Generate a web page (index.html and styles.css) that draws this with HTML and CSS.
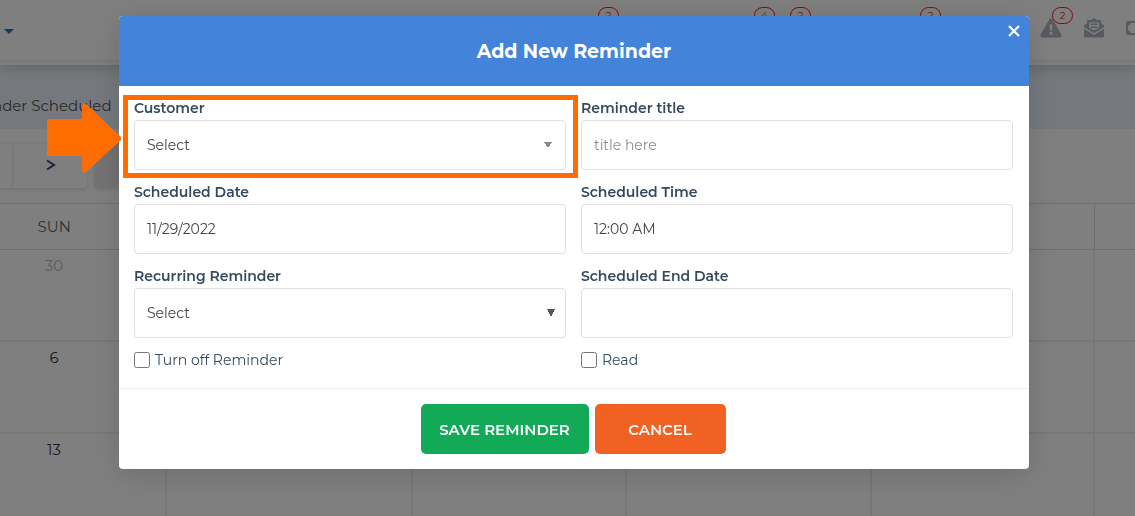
FILE: index.html
```
<!DOCTYPE html>
<html lang="en">
<head>
    <meta charset="UTF-8">
    <meta name="viewport" content="width=device-width, initial-scale=1.0">
    <title>Reminder Scheduled</title>
    <link rel="stylesheet" href="styles.css">
</head>
<body>

<div class="page">
    <header class="topbar">
        <span class="caret"></span>
        <nav class="notifications">
            <span class="notice notice-first"><span class="badge">2</span></span>
            <span class="notice notice-second"><span class="badge">4</span></span>
            <span class="notice notice-third"><span class="badge">2</span></span>
            <span class="notice notice-fourth"><span class="badge">2</span></span>
            <span class="notice">
                <svg width="22" height="20" viewBox="0 0 22 20"><path fill="#aeb5bf" fill-rule="evenodd" d="M9.3 1.5a2 2 0 0 1 3.4 0l8.600 15a2 2 0 0 1-1.700 3H2.400a2 2 0 0 1-1.700-3zM9.500 6.500l.4 6h2.200l.4-6zM11 13.600a1.700 1.700 0 1 0 0 3.400 1.700 1.700 0 0 0 0-3.400z"/></svg>
                <span class="badge">2</span>
            </span>
            <span class="notice">
                <svg width="20" height="20" viewBox="0 0 20 20"><path fill="#aeb5bf" fill-rule="evenodd" d="M10 0l3 2h4v3l3 2.400v1.800l-10 6-10-6V7.400L3 5V2h4zM5 4.500v5l5 3 5-3v-5z"/><path fill="#aeb5bf" d="M0 10.800l10 6 10-6V18a1.500 1.500 0 0 1-1.500 1.500h-17A1.500 1.500 0 0 1 0 18zM6.500 5.500h7v1.500h-7zM6.500 8.500h7V10h-7z"/></svg>
            </span>
            <span class="notice">
                <svg width="20" height="16" viewBox="0 0 20 16"><path fill="#aeb5bf" fill-rule="evenodd" d="M2 1h16a2 2 0 0 1 2 2v10a2 2 0 0 1-2 2H2a2 2 0 0 1-2-2V3a2 2 0 0 1 2-2zM4.500 3A2.500 2.500 0 0 1 2 5.500v5A2.500 2.500 0 0 1 4.500 13h11a2.500 2.500 0 0 1 2.500-2.500v-5A2.500 2.500 0 0 1 15.500 3z"/></svg>
            </span>
        </nav>
    </header>

    <div class="page-title">nder Scheduled</div>

    <div class="calendar-tools">
        <button class="tool prev" type="button" aria-label="Previous"></button>
        <button class="tool next" type="button" aria-label="Next">
            <svg width="10" height="12" viewBox="0 0 10 12"><path d="M1 1.500l7 4.500-7 4.500" fill="none" stroke="#34495e" stroke-width="2"/></svg>
        </button>
        <button class="tool today" type="button" aria-label="Today"></button>
    </div>

    <table class="calendar">
        <colgroup>
            <col class="col-sun"><col class="col-mon"><col class="col-tue"><col class="col-wed"><col class="col-thu"><col>
        </colgroup>
        <thead>
            <tr><th>SUN</th><th></th><th></th><th></th><th></th><th></th></tr>
        </thead>
        <tbody>
            <tr><td class="other-month">30</td><td></td><td></td><td></td><td></td><td></td></tr>
            <tr><td>6</td><td></td><td></td><td></td><td></td><td></td></tr>
            <tr><td>13</td><td></td><td></td><td></td><td></td><td></td></tr>
        </tbody>
    </table>
</div>

<div class="backdrop">
    <form class="modal" role="dialog" aria-labelledby="modalTitle">
        <div class="modal-header">
            <h2 id="modalTitle">Add New Reminder</h2>
            <button class="close" type="button" aria-label="Close">
                <svg width="12" height="12" viewBox="0 0 12 12"><path d="M1 1l10 10M11 1L1 11" stroke="#fff" stroke-width="2.200"/></svg>
            </button>
        </div>

        <div class="modal-body">
            <div class="field highlighted">
                <label for="customer">Customer</label>
                <select id="customer" class="customer"><option>Select</option></select>
                <svg class="pointer" width="75" height="70" viewBox="0 0 75 70"><path fill="#ff6c00" d="M1 16h34V3q1-4 4-2l35 33v3L39 69q-3 2-4-2V53H1q-1 0-1-1V17q0-1 1-1z"/></svg>
            </div>
            <div class="field">
                <label for="title">Reminder title</label>
                <input type="text" id="title" placeholder="title here">
            </div>
            <div class="field">
                <label for="date">Scheduled Date</label>
                <input type="text" id="date" value="11/29/2022">
            </div>
            <div class="field">
                <label for="time">Scheduled Time</label>
                <input type="text" id="time" value="12:00 AM">
            </div>
            <div class="field">
                <label for="recurring">Recurring Reminder</label>
                <select id="recurring" class="recurring"><option>Select</option></select>
            </div>
            <div class="field">
                <label for="endDate">Scheduled End Date</label>
                <input type="text" id="endDate">
            </div>
            <div class="check">
                <input type="checkbox" id="turnOff">
                <label for="turnOff">Turn off Reminder</label>
            </div>
            <div class="check">
                <input type="checkbox" id="read">
                <label for="read">Read</label>
            </div>
        </div>

        <div class="modal-footer">
            <button class="btn save" type="button">SAVE REMINDER</button>
            <button class="btn cancel" type="button">CANCEL</button>
        </div>
    </form>
</div>

</body>
</html>
```

FILE: styles.css
```
* {
    box-sizing: border-box;
}

body {
    margin: 0;
    font-family: Montserrat, Inter, sans-serif;
    font-size: 14px;
    color: #34495e;
    background: #fff;
    overflow: hidden;
}

button, input, select {
    font: inherit;
}

/* page behind the modal */
.page {
    height: 100vh;
    overflow: hidden;
}

.topbar {
    position: relative;
    display: flex;
    align-items: center;
    height: 61px;
    padding: 0 0 4px 4px;
    border-bottom: 1px solid #eee;
    box-shadow: 0 4px 0 #fafafa, 0 6px 14px rgba(0, 0, 0, 0.2);
}

.caret {
    margin-top: 6px;
    border: 5px solid transparent;
    border-top-color: #2a6fc9;
    border-bottom: 0;
}

.notifications {
    display: flex;
    gap: 22px;
    margin-left: auto;
    margin-right: -11px;
}

.notice {
    position: relative;
    display: flex;
    align-items: center;
    min-width: 20px;
    height: 20px;
}

.notice-first {
    margin-right: 114px;
}

.notice-second {
    margin-right: -6px;
}

.notice-third {
    margin-right: 88px;
}

.notice-fourth {
    margin-right: 90px;
}

.badge {
    position: absolute;
    left: 12px;
    bottom: 14px;
    width: 21px;
    height: 17px;
    border: 1px solid #e02020;
    border-radius: 9px;
    font-size: 10px;
    line-height: 15px;
    text-align: center;
    color: #e02020;
}

.page-title {
    height: 64px;
    margin-top: 4px;
    padding-top: 32px;
    font-size: 15px;
    line-height: 18px;
    text-indent: -8px;
    background: #eaf3fa;
    border-bottom: 2px solid #eeeef8;
    color: #555;
}

.calendar-tools {
    display: flex;
    height: 74px;
    padding-top: 15px;
}

.tool {
    height: 44px;
    padding: 0;
    border: 0;
    background: #fff;
    box-shadow: 0 1px 4px rgba(0, 0, 0, 0.15);
}

.prev {
    width: 14px;
}

.next {
    width: 73px;
    border-radius: 0 4px 4px 0;
}

.today {
    width: 80px;
    margin-left: 7px;
    border-radius: 4px;
    background: #e6e6e6;
}

.calendar {
    width: 100%;
    table-layout: fixed;
    border-collapse: collapse;
}

.calendar th {
    height: 46px;
    padding: 0 57px 0 0;
    border: 1px solid #ddd;
    font-size: 15px;
    font-weight: 400;
    color: #666;
}

.calendar td {
    height: 92px;
    padding: 6px 57px 0 0;
    border: 2px solid #eee;
    font-size: 15px;
    text-align: center;
    vertical-align: top;
    color: #333;
}

.calendar tbody tr:first-child td {
    height: 91px;
    border-top: 1px solid #ddd;
}

.calendar th:first-child, .calendar td:first-child {
    border-left: 0;
}

.calendar th:last-child, .calendar td:last-child {
    border-right: 0;
}

.calendar td.other-month {
    color: #bbb;
}

.col-sun {
    width: 166px;
}

.col-mon {
    width: 246px;
}

.col-tue {
    width: 214px;
}

.col-wed {
    width: 245px;
}

.col-thu {
    width: 223px;
}

/* modal */
.backdrop {
    position: fixed;
    inset: 0;
    padding: 16px 106px 16px 119px;
    background: rgba(0, 0, 0, 0.5);
}

.modal {
    border-radius: 4px;
    background: #fff;
    box-shadow: 0 5px 30px rgba(0, 0, 0, 0.15);
}

.modal-header {
    position: relative;
    display: flex;
    align-items: center;
    justify-content: center;
    height: 70px;
    border-radius: 4px 4px 0 0;
    background: #4383da;
    color: #fff;
}

.modal-header h2 {
    margin: 0;
    font-size: 19px;
    font-weight: 700;
}

.close {
    position: absolute;
    top: 9px;
    right: 9px;
    display: flex;
    padding: 0;
    border: 0;
    background: none;
}

.modal-body {
    display: grid;
    grid-template-columns: 1fr 1fr;
    column-gap: 15px;
    row-gap: 8px;
    padding: 10px 16px 16px 15px;
}

.field {
    display: flex;
    flex-direction: column;
    height: 76px;
}

.field label {
    height: 24px;
    line-height: 24px;
    font-size: 14px;
    font-weight: 600;
}

.field input, .field select {
    width: 100%;
    height: 50px;
    padding: 0 12px;
    border: 1px solid #e0e0e0;
    border-radius: 4px;
    background: #fff;
    color: #444;
    outline: none;
}

.field input::placeholder {
    color: #868e96;
}

.field select {
    appearance: none;
    background-repeat: no-repeat;
}

.field .customer {
    background-image: linear-gradient(to top right, transparent 50%, #888 51%), linear-gradient(to top left, transparent 50%, #888 51%);
    background-size: 4px 6px, 4px 6px;
    background-position: right 17px center, right 13px center;
}

.field .recurring {
    background-image: linear-gradient(to top right, transparent 50%, #555 51%), linear-gradient(to top left, transparent 50%, #555 51%);
    background-size: 4px 8px, 4px 8px;
    background-position: right 14px center, right 10px center;
}

/* orange frame and arrow around the customer field */
.highlighted {
    position: relative;
}

.highlighted::before {
    content: "";
    position: absolute;
    inset: -1px -12px -6px -11px;
    border: 5px solid #ff6c00;
    pointer-events: none;
}

.pointer {
    position: absolute;
    left: -87px;
    top: 7px;
}

.check {
    display: flex;
    align-items: center;
    gap: 5px;
    height: 24px;
}

.check input {
    width: 16px;
    height: 16px;
    margin: 0;
}

.modal-footer {
    display: flex;
    justify-content: center;
    gap: 6px;
    padding: 15px 17px 15px 15px;
    border-top: 1px solid #f0f0f0;
}

.btn {
    height: 50px;
    border: 0;
    border-radius: 5px;
    font-size: 15px;
    font-weight: 600;
    color: #fff;
}

.save {
    width: 168px;
    background: #12a957;
}

.cancel {
    width: 131px;
    background: #f06122;
}
```
